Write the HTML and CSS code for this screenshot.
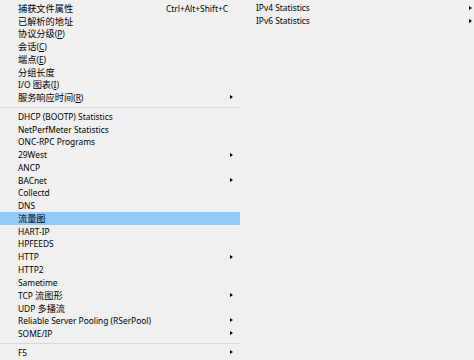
FILE: index.html
```html
<!DOCTYPE html>
<html lang="zh-CN">
<head>
<meta charset="utf-8">
<link rel="stylesheet" href="styles.css">
</head>
<body>
<div class="screen">
  <div class="menu">
    <div class="item"><span class="label"><span class="zh">捕获文件属性</span></span><span class="shortcut">Ctrl+Alt+Shift+C</span><span class="arrow-cell"></span></div>
    <div class="item"><span class="label"><span class="zh">已解析的地址</span></span><span class="arrow-cell"></span></div>
    <div class="item"><span class="label"><span class="zh">协议分级</span>(<u>P</u>)</span><span class="arrow-cell"></span></div>
    <div class="item"><span class="label"><span class="zh">会话</span>(<u>C</u>)</span><span class="arrow-cell"></span></div>
    <div class="item"><span class="label"><span class="zh">端点</span>(<u>E</u>)</span><span class="arrow-cell"></span></div>
    <div class="item"><span class="label"><span class="zh">分组长度</span></span><span class="arrow-cell"></span></div>
    <div class="item"><span class="label">I/O <span class="zh">图表</span>(<u>I</u>)</span><span class="arrow-cell"></span></div>
    <div class="item"><span class="label"><span class="zh">服务响应时间</span>(<u>R</u>)</span><span class="arrow-cell"><i class="arrow"></i></span></div>
    <div class="sep"></div>
    <div class="item"><span class="label">DHCP (BOOTP) Statistics</span><span class="arrow-cell"></span></div>
    <div class="item"><span class="label">NetPerfMeter Statistics</span><span class="arrow-cell"></span></div>
    <div class="item"><span class="label">ONC-RPC Programs</span><span class="arrow-cell"></span></div>
    <div class="item"><span class="label">29West</span><span class="arrow-cell"><i class="arrow"></i></span></div>
    <div class="item"><span class="label">ANCP</span><span class="arrow-cell"></span></div>
    <div class="item"><span class="label">BACnet</span><span class="arrow-cell"><i class="arrow"></i></span></div>
    <div class="item"><span class="label">Collectd</span><span class="arrow-cell"></span></div>
    <div class="item"><span class="label">DNS</span><span class="arrow-cell"></span></div>
    <div class="item active"><span class="label"><span class="zh">流量图</span></span><span class="arrow-cell"></span></div>
    <div class="item"><span class="label">HART-IP</span><span class="arrow-cell"></span></div>
    <div class="item"><span class="label">HPFEEDS</span><span class="arrow-cell"></span></div>
    <div class="item"><span class="label">HTTP</span><span class="arrow-cell"><i class="arrow"></i></span></div>
    <div class="item"><span class="label">HTTP2</span><span class="arrow-cell"></span></div>
    <div class="item"><span class="label">Sametime</span><span class="arrow-cell"></span></div>
    <div class="item"><span class="label">TCP <span class="zh">流图形</span></span><span class="arrow-cell"><i class="arrow"></i></span></div>
    <div class="item"><span class="label">UDP <span class="zh">多播流</span></span><span class="arrow-cell"></span></div>
    <div class="item"><span class="label">Reliable Server Pooling (RSerPool)</span><span class="arrow-cell"><i class="arrow"></i></span></div>
    <div class="item"><span class="label">SOME/IP</span><span class="arrow-cell"><i class="arrow"></i></span></div>
    <div class="sep"></div>
    <div class="item"><span class="label">F5</span><span class="arrow-cell"><i class="arrow"></i></span></div>
  </div>
  <div class="submenu">
    <div class="item sub"><span class="label">IPv4 Statistics</span><span class="arrow-cell"><i class="arrow"></i></span></div>
    <div class="item sub"><span class="label">IPv6 Statistics</span><span class="arrow-cell"><i class="arrow"></i></span></div>
  </div>
</div>
</body>
</html>
```
FILE: styles.css
```css
html, body {
  margin: 0;
  padding: 0;
  background: #f0f0f0;
}
.screen {
  display: flex;
  width: 474px;
  height: 360px;
  overflow: hidden;
  font-family: "Noto Sans", "Noto Sans CJK SC", sans-serif;
  font-size: 8.4px;
  color: #000;
}
.menu {
  width: 240px;
  padding-top: 1.6px;
  display: flex;
  flex-direction: column;
}
.submenu {
  flex: 1;
  padding-top: 1.6px;
  display: flex;
  flex-direction: column;
}
.item {
  height: 12.75px;
  display: flex;
  align-items: center;
  padding-left: 18px;
  white-space: nowrap;
}
.item.sub {
  padding-left: 16px;
}
.item.active {
  background: #91c9f7;
}
.label {
  flex: 1;
  line-height: 12px;
  padding-top: 1px;
}
.zh {
  font-family: "Noto Sans CJK SC", sans-serif;
  font-size: 9.2px;
}
.label u {
  text-decoration-thickness: 1px;
  text-underline-offset: 1px;
}
.shortcut {
  padding-right: 1px;
  padding-top: 1px;
}
.arrow-cell {
  width: 11px;
  display: flex;
  align-items: center;
}
.sub .arrow-cell {
  width: 6px;
}
.arrow {
  display: block;
  margin-left: 1px;
  width: 0;
  height: 0;
  border-top: 2px solid transparent;
  border-bottom: 2px solid transparent;
  border-left: 3px solid #000;
}
.sep {
  height: 1px;
  background: #d9d9d9;
  margin: 3px 0 2.5px;
}
```
